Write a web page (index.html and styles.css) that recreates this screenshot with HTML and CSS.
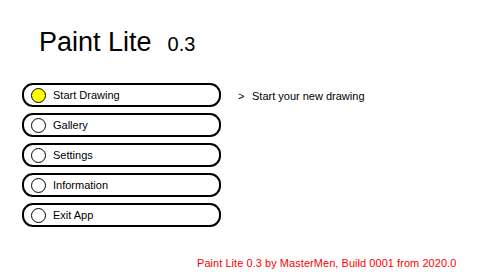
FILE: index.html
```html
<!DOCTYPE html>
<html>
<head>
<meta charset="utf-8">
<link rel="stylesheet" href="styles.css">
</head>
<body>
<div class="screen">
  <div class="title"><span class="name">Paint Lite</span><span class="ver">0.3</span></div>
  <div class="main">
    <div class="menu">
      <div class="btn"><span class="dot on"></span><span class="lbl">Start Drawing</span></div>
      <div class="btn"><span class="dot"></span><span class="lbl">Gallery</span></div>
      <div class="btn"><span class="dot"></span><span class="lbl">Settings</span></div>
      <div class="btn"><span class="dot"></span><span class="lbl">Information</span></div>
      <div class="btn"><span class="dot"></span><span class="lbl">Exit App</span></div>
    </div>
    <div class="hint"><span class="arrow">&gt;</span>Start your new drawing</div>
  </div>
  <div class="footer">Paint Lite 0.3 by MasterMen, Build 0001 from 2020.0</div>
</div>
</body>
</html>
```
FILE: styles.css
```css
html, body { margin: 0; padding: 0; background: #fff; }
.screen {
  width: 480px; height: 272px; position: relative;
  font-family: "Liberation Sans", Arial, sans-serif; color: #000;
  display: flex; flex-direction: column;
}
.title {
  display: flex; align-items: baseline;
  padding: 29px 0 0 39px; height: 30px;
}
.name { font-size: 27px; line-height: 27px; }
.ver { font-size: 20px; margin-left: 16px; }
.main {
  display: flex; margin-top: 24px; padding-left: 22px;
}
.menu { display: flex; flex-direction: column; gap: 6px; width: 199px; }
.btn {
  height: 20px; border: 2px solid #000; border-radius: 11px;
  display: flex; align-items: center; padding-left: 7px;
}
.dot {
  width: 13px; height: 13px; border: 1px solid #000; border-radius: 50%;
  background: #fff; box-sizing: content-box;
}
.dot.on { background: #ffff00; }
.lbl { font-size: 11px; margin-left: 7px; }
.hint { font-size: 11px; margin-left: 17px; padding-top: 7px; display: flex; }
.arrow { width: 14px; }
.footer {
  position: absolute; left: 197px; top: 257px;
  font-size: 11px; letter-spacing: 0.05px; color: #ff0000;
}
```
